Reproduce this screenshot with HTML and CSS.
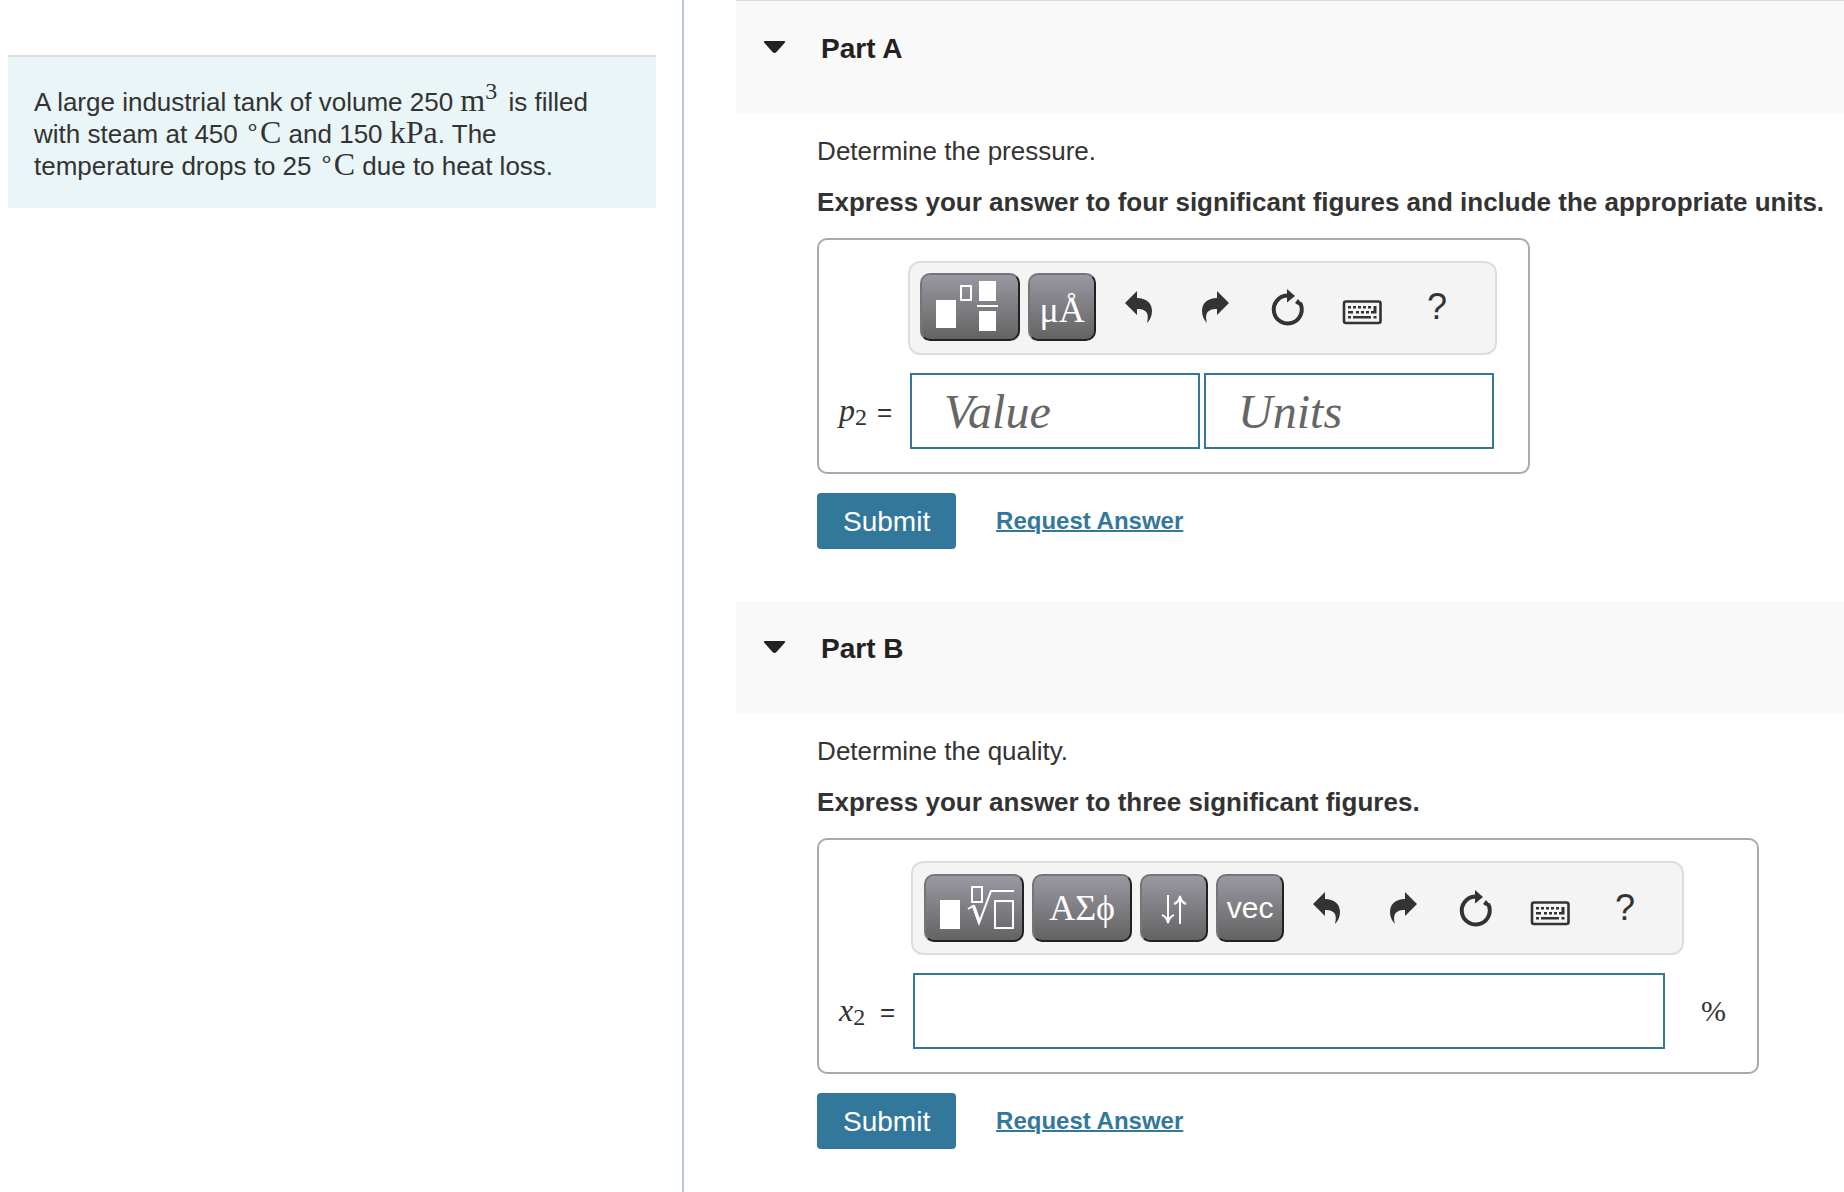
FILE: index.html
```html
<!DOCTYPE html>
<html lang="en">
<head>
<meta charset="utf-8">
<meta name="viewport" content="width=device-width, initial-scale=1">
<title>Steam tank problem</title>
<link rel="stylesheet" href="styles.css">
</head>
<body>
<svg class="sprite" aria-hidden="true">
  <symbol id="icon-undo" viewBox="0 0 75 68">
    <path d="M24 30 36 18v7c9 0 15 5 15 13 0 5-2 9-5 12 2-8 1-14-10-14v6z"/>
  </symbol>
  <symbol id="icon-redo" viewBox="0 0 75 68">
    <path d="M53 30 41 18v7c-9 0-15 5-15 13 0 5 2 9 5 12-2-8-1-14 10-14v6z"/>
  </symbol>
  <symbol id="icon-reset" viewBox="0 0 75 68">
    <path d="M36 22.500a14 14 0 1 0 13 7.200" fill="none" stroke="currentColor" stroke-width="4"/>
    <path d="m36 16 8 7-8 6.500z"/><path d="m47 26 4 5-4 1-3-2z"/>
  </symbol>
  <symbol id="icon-keyboard" viewBox="0 0 75 68">
    <rect x="18" y="28.500" width="36.500" height="21.500" rx="2" fill="none" stroke="currentColor" stroke-width="2.600"/>
    <path d="M22 33h3v2.500h-3zm5 0h3v2.500h-3zm5 0h3v2.500h-3zm5 0h3v2.500h-3zm5 0h3v2.500h-3zm5.500 0h3v7.500h-5.500v-2.500h2.500zM22 38h5v2.500h-5zm8 0h3v2.500h-3zm5 0h3v2.500h-3zm5 0h3v2.500h-3zM22 43h3v2.500h-3zm5 0h18v2.500H27zm20.500 0h3v2.500h-3z"/>
  </symbol>
</svg>
<div class="page">
  <aside class="sidebar">
    <p class="problem">A large industrial tank of volume 250 <span class="math">m<sup>3</sup></span> is filled with steam at 450 <span class="math"><span class="degree">∘</span>C</span> and 150 <span class="math">kPa</span>. The temperature drops to 25 <span class="math"><span class="degree">∘</span>C</span> due to heat loss.</p>
  </aside>
  <main class="parts">
    <section class="part">
      <header class="part-header">
        <button class="toggle" type="button" aria-label="Collapse Part A"><svg viewBox="0 0 21 12"><path d="M1 0h19q2 0 .5 2l-8 9q-2 2-4 0l-8-9Q-1 0 1 0z"/></svg></button>
        <h2>Part A</h2>
      </header>
      <form class="part-body">
        <p>Determine the pressure.</p>
        <p class="instruction">Express your answer to four significant figures and include the appropriate units.</p>
        <div class="answer">
          <div class="toolbar">
            <button class="key wide" type="button" aria-label="Templates"><svg viewBox="0 0 100 68"><path d="M16 27h20v28H16zM59 8h17v20H59zM59 38h17v20H59zM57 32h21v2H57z"/><path d="M41 13h10v14H41z" fill="none" stroke="#fff" stroke-width="2"/></svg></button>
            <button class="key serif units" type="button" aria-label="Units symbols">μÅ</button>
            <div class="tools">
              <button type="button" aria-label="Undo"><svg><use href="#icon-undo"/></svg></button>
              <button type="button" aria-label="Redo"><svg><use href="#icon-redo"/></svg></button>
              <button type="button" aria-label="Reset"><svg><use href="#icon-reset"/></svg></button>
              <button type="button" aria-label="Keyboard shortcuts"><svg><use href="#icon-keyboard"/></svg></button>
              <button class="help" type="button" aria-label="Help">?</button>
            </div>
          </div>
          <label class="variable" for="value"><span><i>p</i><sub>2</sub></span> <span class="equals">=</span></label>
          <div class="fields">
            <input id="value" type="text" placeholder="Value">
            <input type="text" placeholder="Units" aria-label="Units">
          </div>
        </div>
        <div class="actions">
          <button class="submit" type="button">Submit</button>
          <a href="#">Request Answer</a>
        </div>
      </form>
    </section>
    <section class="part">
      <header class="part-header">
        <button class="toggle" type="button" aria-label="Collapse Part B"><svg viewBox="0 0 21 12"><path d="M1 0h19q2 0 .5 2l-8 9q-2 2-4 0l-8-9Q-1 0 1 0z"/></svg></button>
        <h2>Part B</h2>
      </header>
      <form class="part-body">
        <p>Determine the quality.</p>
        <p class="instruction">Express your answer to three significant figures.</p>
        <div class="answer expression">
          <div class="toolbar">
            <button class="key wide" type="button" aria-label="Templates"><svg viewBox="0 0 100 68"><path d="M16 26h20v29H16z"/><path d="M48 13h10v15H48zM71 27h18v27H71zM44 35l5-3 6 17 12-32h23" fill="none" stroke="#fff" stroke-width="2"/><path d="m48 32 3-1 5 14-2 4z"/></svg></button>
            <button class="key wide serif" type="button" aria-label="Greek letters">ΑΣϕ</button>
            <button class="key" type="button" aria-label="Arrows"><svg viewBox="0 0 68 68"><path d="M28 21v27m-6-7q5 2 6 8 1-6 6-8M40 50V23m-6 7q5-2 6-8 1 6 6 8" fill="none" stroke="#fff" stroke-width="2"/></svg></button>
            <button class="key" type="button">vec</button>
            <div class="tools">
              <button type="button" aria-label="Undo"><svg><use href="#icon-undo"/></svg></button>
              <button type="button" aria-label="Redo"><svg><use href="#icon-redo"/></svg></button>
              <button type="button" aria-label="Reset"><svg><use href="#icon-reset"/></svg></button>
              <button type="button" aria-label="Keyboard shortcuts"><svg><use href="#icon-keyboard"/></svg></button>
              <button class="help" type="button" aria-label="Help">?</button>
            </div>
          </div>
          <label class="variable" for="quality"><span><i>x</i><sub>2</sub></span> <span class="equals">=</span></label>
          <div class="fields">
            <input class="long" id="quality" type="text">
            <span class="unit">%</span>
          </div>
        </div>
        <div class="actions">
          <button class="submit" type="button">Submit</button>
          <a href="#">Request Answer</a>
        </div>
      </form>
    </section>
  </main>
</div>
</body>
</html>
```
FILE: styles.css
```css
* { box-sizing: border-box; }
body {
  margin: 0;
  background: #fff;
  color: #333;
  font: 26px/32px "Liberation Sans", Arial, sans-serif;
}
p, h2 { margin: 0; }
button { padding: 0; border: 0; background: none; color: inherit; font: inherit; cursor: pointer; }
svg { display: block; fill: currentColor; }
.sprite { display: none; }

.page { display: flex; min-height: 100vh; }

.sidebar {
  flex: 0 0 37.1%;
  padding: 55px 26px 0 8px;
  border-right: 2px solid #b8c8dc;
}
.problem {
  padding: 29px 32px 26px 26px;
  border-top: 2px solid #ddd;
  background: #eaf5f7;
}
.math { font-family: "Liberation Serif", serif; font-size: 32px; line-height: 0; white-space: nowrap; }
.math sup { margin-right: 4px; font-size: 24px; vertical-align: 12px; line-height: 0; }
.degree { font-size: 24px; vertical-align: 8px; }

.parts { flex: 1; min-width: 0; padding-left: 52px; }
.part + .part { margin-top: 52px; }
.part-header {
  display: flex;
  gap: 36px;
  padding: 32px 28px 49px;
  background: #f9f9f9;
}
.part:first-child .part-header { border-top: 1px solid #ddd; }
.toggle { width: 21px; height: 28px; color: #222; }
.toggle svg { width: 21px; height: 12px; }
.part h2 { color: #222; font-size: 28px; line-height: 32px; }

.part-body { padding: 21px 0 0 81px; }
.instruction { margin-top: 19px; font-weight: bold; }

.answer {
  display: grid;
  grid-template-columns: 53px auto;
  gap: 18px 16px;
  width: fit-content;
  margin-top: 20px;
  padding: 21px 31px 23px 20px;
  border: 2px solid #aaa;
  border-radius: 10px;
}
.answer.expression { grid-template-columns: 56px auto; }
.toolbar {
  grid-column: 2;
  justify-self: start;
  display: flex;
  gap: 8px;
  height: 94px;
  padding: 10px 19px 0 10px;
  border: 2px solid #ddd;
  border-radius: 12px;
  background: #f4f4f4;
}
.expression .toolbar { padding: 11px 18px 0 11px; }
.key {
  display: flex;
  align-items: center;
  justify-content: center;
  width: 68px;
  height: 68px;
  border: 2px solid;
  border-color: #767676 #212121 #212121 #767676;
  border-radius: 10px;
  background: linear-gradient(#9a98a2, #636363);
  color: #fff;
  font-size: 30px;
}
.key.wide { width: 100px; }
.key.serif { font-family: "Liberation Serif", serif; font-size: 36px; }
.key.units { padding-top: 6px; }
.key svg { flex: none; width: 68px; height: 68px; }
.key.wide svg { width: 100px; }
.tools { display: flex; margin-left: -3px; }
.tools button { width: 75px; height: 68px; }
.tools svg { width: 75px; height: 68px; }
.tools .help { padding-right: 3px; font-size: 36px; }

.variable {
  align-self: center;
  display: flex;
  justify-content: space-between;
  align-items: baseline;
  font-family: "Liberation Serif", serif;
  font-size: 32px;
  white-space: nowrap;
}
.variable sub { font-size: 24px; vertical-align: -4px; line-height: 0; }
.equals { font-family: "Liberation Sans", Arial, sans-serif; font-size: 26px; }
.fields { display: flex; align-items: center; gap: 4px; padding-left: 2px; }
.fields input {
  width: 290px;
  height: 76px;
  padding: 0 32px;
  border: 2px solid #33789a;
  border-radius: 0;
  color: #333;
  font: italic 48px "Liberation Serif", serif;
}
.fields input::placeholder { color: #666; opacity: 1; }
.fields .long { width: 752px; }
.unit { margin-left: 32px; font-family: "Liberation Serif", serif; font-size: 30px; }

.actions { display: flex; align-items: center; gap: 40px; margin-top: 19px; }
.submit {
  width: 139px;
  height: 56px;
  padding-top: 2px;
  border-radius: 4px;
  background: #33789a;
  color: #fff;
  font-size: 28px;
}
.actions a {
  color: #33789a;
  font-size: 24px;
  font-weight: bold;
  text-decoration-thickness: 2px;
}
```
